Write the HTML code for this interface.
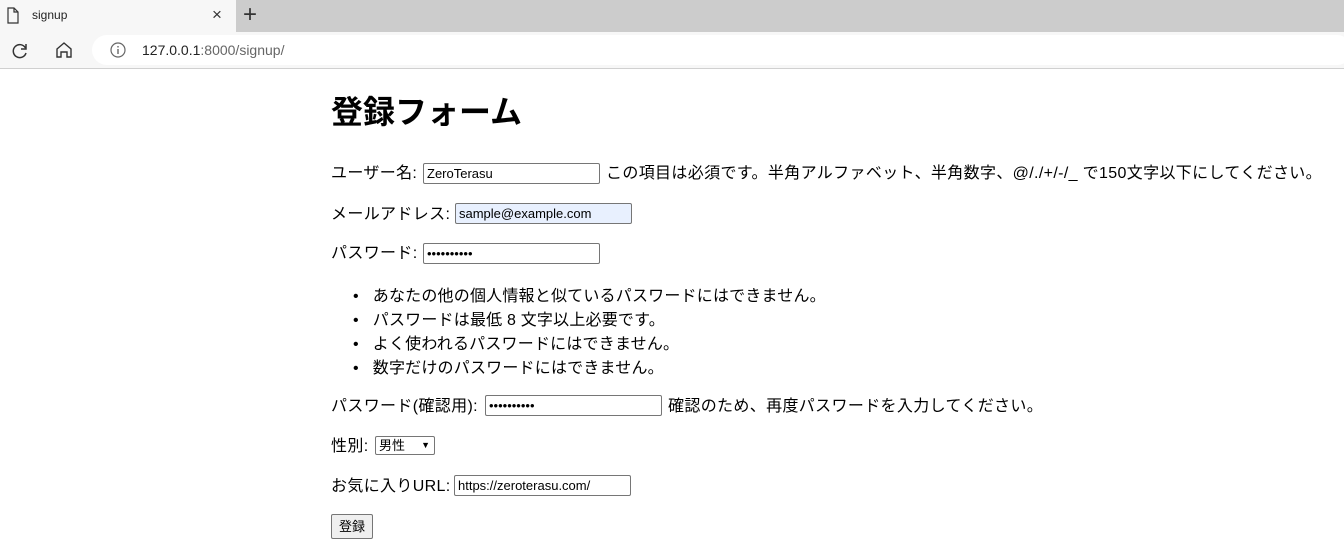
<!DOCTYPE html>
<html><head><meta charset="utf-8"><style>
*{box-sizing:border-box}
body{margin:0;width:1344px;height:556px;overflow:hidden;background:#fff;font-family:"Liberation Sans","Noto Sans CJK JP",sans-serif;color:#000;position:relative}
.a{position:absolute;white-space:nowrap}
.t{font-size:16px;line-height:20px;letter-spacing:0.35px;margin-top:2px}
.in{position:absolute;height:21px;border:1px solid #767676;border-radius:2px;font-size:13px;line-height:19px;padding-left:3px;background:#fff}
</style></head><body>
<div class="a" style="left:0;top:0;width:1344px;height:32px;background:#cccccc"></div>
<div class="a" style="left:0;top:0;width:236px;height:32px;background:#f7f7f7"></div>
<div class="a" style="left:0;top:32px;width:1344px;height:37px;background:#f7f7f7;border-bottom:1px solid #d0d0d0"></div>
<svg class="a" style="left:6px;top:7px" width="14" height="18" viewBox="0 0 14 18"><path d="M2 1h6l4 4v11H2z M8 1v4h4" fill="none" stroke="#333" stroke-width="1.2"/></svg>
<div class="a" style="left:32px;top:8px;font-size:12px;color:#222">signup</div>
<div class="a" style="left:212px;top:5px;font-size:17px;color:#333">×</div>
<div class="a" style="left:243px;top:1px;font-size:24px;color:#333">+</div>
<svg class="a" style="left:10px;top:41px" width="20" height="20" viewBox="0 0 20 20"><path d="M15.5 7A6.5 6.5 0 1 0 16 12" fill="none" stroke="#333" stroke-width="1.5"/><path d="M16 3v5h-5" fill="none" stroke="#333" stroke-width="1.5"/></svg>
<svg class="a" style="left:55px;top:41px" width="18" height="18" viewBox="0 0 18 18"><path d="M2 8L9 2l7 6v8h-4v-5H6v5H2z" fill="none" stroke="#333" stroke-width="1.4"/></svg>
<div class="a" style="left:92px;top:35px;width:1260px;height:30px;background:#fff;border-radius:15px"></div>
<svg class="a" style="left:110px;top:42px" width="16" height="16" viewBox="0 0 16 16"><circle cx="8" cy="8" r="7" fill="none" stroke="#666" stroke-width="1.2"/><path d="M8 7v5M8 4v1.5" stroke="#666" stroke-width="1.4"/></svg>
<div class="a" style="left:142px;top:42px;font-size:14px;color:#222">127.0.0.1<span style="color:#666">:8000/signup/</span></div>

<div class="a" style="left:331px;top:93px;font-size:32px;font-weight:bold;line-height:38px">登録フォーム</div>
<div class="a t" style="left:331px;top:162px">ユーザー名:</div>
<div class="in" style="left:423px;top:163px;width:177px">ZeroTerasu</div>
<div class="a t" style="left:606px;top:162px">この項目は必須です。半角アルファベット、半角数字、@/./+/-/_ で150文字以下にしてください。</div>
<div class="a t" style="left:331px;top:203px">メールアドレス:</div>
<div class="in" style="left:455px;top:203px;width:177px;background:#e8f0fe">sample@example.com</div>
<div class="a t" style="left:331px;top:242px">パスワード:</div>
<div class="in" style="left:423px;top:243px;width:177px">••••••••••</div>
<div class="a t" style="left:353px;top:283px;line-height:24px;letter-spacing:0.2px">•&nbsp;&nbsp;&nbsp;あなたの他の個人情報と似ているパスワードにはできません。<br>•&nbsp;&nbsp;&nbsp;パスワードは最低 8 文字以上必要です。<br>•&nbsp;&nbsp;&nbsp;よく使われるパスワードにはできません。<br>•&nbsp;&nbsp;&nbsp;数字だけのパスワードにはできません。</div>
<div class="a t" style="left:331px;top:395px">パスワード(確認用):</div>
<div class="in" style="left:485px;top:395px;width:177px">••••••••••</div>
<div class="a t" style="left:668px;top:395px">確認のため、再度パスワードを入力してください。</div>
<div class="a t" style="left:331px;top:435px">性別:</div>
<div class="in" style="left:375px;top:436px;width:60px;height:19px;line-height:17px">男性<span style="position:absolute;right:4px;top:0;font-size:9px">▼</span></div>
<div class="a t" style="left:331px;top:475px">お気に入りURL:</div>
<div class="in" style="left:454px;top:475px;width:177px">https://zeroterasu.com/</div>
<div class="a" style="left:331px;top:514px;width:42px;height:25px;border:1px solid #767676;border-radius:2px;background:#efefef;font-size:13px;line-height:23px;text-align:center">登録</div>
</body></html>
